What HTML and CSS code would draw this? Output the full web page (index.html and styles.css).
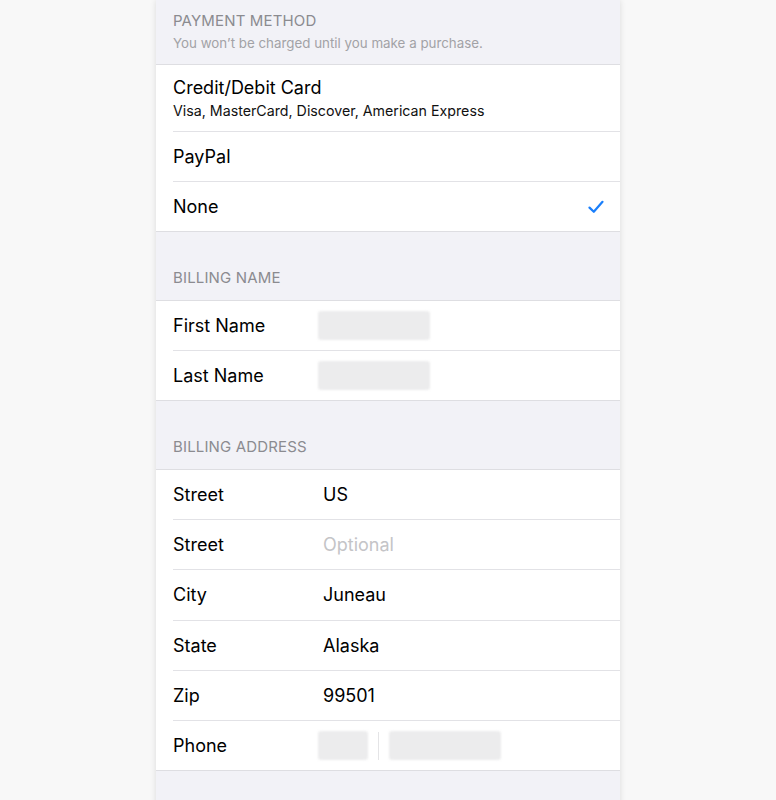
FILE: index.html
```html
<!DOCTYPE html>
<html>
<head>
<meta charset="utf-8">
<link rel="stylesheet" href="styles.css">
</head>
<body>
<div class="panel">
  <div class="section-head first">
    <div class="head-title">PAYMENT METHOD</div>
    <div class="head-sub">You won’t be charged until you make a purchase.</div>
  </div>
  <div class="group">
    <div class="row tall">
      <div class="row-title">Credit/Debit Card</div>
      <div class="row-sub">Visa, MasterCard, Discover, American Express</div>
    </div>
    <div class="row"><span class="label">PayPal</span></div>
    <div class="row">
      <span class="label">None</span>
      <svg class="check" width="16" height="14" viewBox="0 0 16 14"><path d="M1.5 7.6 L5.8 11.8 L14.5 1.8" fill="none" stroke="#1a7ffb" stroke-width="2.2" stroke-linecap="round" stroke-linejoin="round"/></svg>
    </div>
  </div>

  <div class="section-head"><div class="head-title">BILLING NAME</div></div>
  <div class="group">
    <div class="row"><span class="label">First Name</span><span class="blur wide"></span></div>
    <div class="row"><span class="label">Last Name</span><span class="blur wide"></span></div>
  </div>

  <div class="section-head"><div class="head-title">BILLING ADDRESS</div></div>
  <div class="group address">
    <div class="row"><span class="label">Street</span><span class="value">US</span></div>
    <div class="row"><span class="label">Street</span><span class="value placeholder">Optional</span></div>
    <div class="row"><span class="label">City</span><span class="value">Juneau</span></div>
    <div class="row"><span class="label">State</span><span class="value">Alaska</span></div>
    <div class="row"><span class="label">Zip</span><span class="value">99501</span></div>
    <div class="row"><span class="label">Phone</span><span class="phone"><span class="blur short"></span><span class="divider"></span><span class="blur wide"></span></span></div>
  </div>
  <div class="footer-space"></div>
</div>
</body>
</html>
```

FILE: styles.css
```css
html, body {
  margin: 0;
  padding: 0;
  background: #f8f8f8;
  font-family: Inter, "Noto Sans", "Liberation Sans", sans-serif;
  color: #000;
}

.panel {
  width: 464px;
  margin: 0 auto;
  background: #f2f2f7;
  box-shadow: 0 0 6px rgba(0,0,0,0.12);
  min-height: 800px;
}

.section-head {
  padding: 36px 17px 11px;
  height: 21px;
}
.section-head.first {
  padding: 11px 17px 0;
  height: 53px;
}
.head-title {
  font-size: 15px;
  line-height: 20px;
  color: #8b8b90;
  letter-spacing: 0.15px;
}
.head-sub {
  font-size: 13.35px;
  line-height: 18px;
  margin-top: 3px;
  color: #a2a2a6;
}

.group {
  background: #fff;
  border-top: 1px solid #dedee2;
  border-bottom: 1px solid #dedee2;
}

.row {
  margin-left: 17px;
  padding-right: 17px;
  height: 49px;
  border-bottom: 1px solid #e2e2e6;
  display: flex;
  align-items: center;
  font-size: 18px;
}
.address .row {
  height: 49.2px;
}
.row:last-child {
  border-bottom: none;
}
.row.tall {
  height: 66px;
  flex-direction: column;
  align-items: flex-start;
  justify-content: center;
  gap: 2px;
}
.row-title {
  font-size: 18px;
  line-height: 23px;
}
.row-sub {
  font-size: 14.23px;
  line-height: 20px;
  color: #111;
}

.label {
  width: 150px;
  flex: none;
}
.value {
  font-size: 18px;
}
.placeholder {
  color: #c4c4c7;
}

.check {
  margin-left: auto;
  margin-right: -1px;
}

.blur {
  display: block;
  height: 29px;
  background: #ececed;
  border-radius: 3px;
  filter: blur(1px);
}
.blur.wide {
  width: 112px;
  margin-left: -5px;
}
.phone {
  display: flex;
  align-items: center;
  margin-left: -5px;
}
.phone .blur.short {
  width: 50px;
}
.phone .blur.wide {
  margin-left: 0;
}
.divider {
  width: 1px;
  height: 28px;
  background: #e4e4e6;
  margin: 0 10px;
}
.footer-space {
  height: 40px;
}
```
